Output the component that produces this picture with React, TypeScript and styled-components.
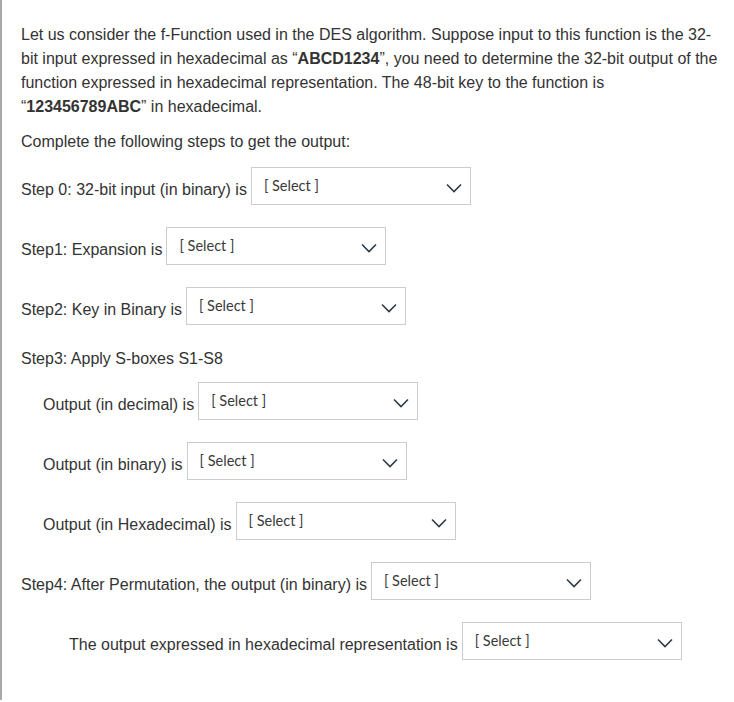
import styled, { createGlobalStyle } from "styled-components";

const GlobalStyle = createGlobalStyle`
  html, body {
    margin: 0;
    padding: 0;
    background: #ffffff;
  }
  body {
    font-family: "Liberation Sans", Arial, Helvetica, sans-serif;
    color: #333333;
  }
`;

const Page = styled.div`
  width: 734px;
  height: 700px;
  box-sizing: border-box;
  border-left: 2px solid #a8a8a8;
  padding: 23px 16px 0 19px;
`;

const Paragraph = styled.p<{ $gap?: number }>`
  margin: 0 0 ${(p) => p.$gap ?? 0}px 0;
  font-size: 16px;
  line-height: 24px;
`;

const Row = styled.div<{ $indent?: number }>`
  display: flex;
  align-items: flex-start;
  margin: 0 0 22px ${(p) => p.$indent ?? 0}px;
`;

const Label = styled.span`
  font-size: 16px;
  line-height: 24px;
  margin-top: 11px;
  margin-right: 4px;
  white-space: nowrap;
`;

const Heading = styled.div`
  font-size: 16px;
  line-height: 24px;
  margin: 1px 0 11px 0;
`;

const SelectBox = styled.div`
  width: 220px;
  height: 38px;
  box-sizing: border-box;
  border: 1px solid #c7cdd1;
  background: #fff;
  display: flex;
  align-items: flex-start;
  justify-content: space-between;
  padding: 8px 8px 0 12px;
`;

const SelectText = styled.span`
  font-family: Lato, "Liberation Sans", sans-serif;
  font-size: 14.5px;
  line-height: 20px;
  color: #3a3a3a;
`;

const Chevron = styled.svg`
  width: 16px;
  height: 10px;
  margin-top: 7px;
`;

function Select() {
  return (
    <SelectBox>
      <SelectText>[ Select ]</SelectText>
      <Chevron viewBox="0 0 16 10">
        <path d="M1 1.5 L8 8.5 L15 1.5" fill="none" stroke="#2d3b45" strokeWidth="1.6" />
      </Chevron>
    </SelectBox>
  );
}

const steps: { label: string; indent: number }[][] = [
  [
    { label: "Step 0: 32-bit input (in binary) is", indent: 0 },
    { label: "Step1: Expansion is", indent: 0 },
    { label: "Step2: Key in Binary is", indent: 0 },
  ],
  [
    { label: "Output (in decimal) is", indent: 22 },
    { label: "Output (in binary) is", indent: 22 },
    { label: "Output (in Hexadecimal) is", indent: 22 },
    { label: "Step4: After Permutation, the output (in binary) is", indent: 0 },
    { label: "The output expressed in hexadecimal representation is", indent: 48 },
  ],
];

function App() {
  return (
    <Page>
      <GlobalStyle />
      <Paragraph $gap={11}>
        Let us consider the f-Function used in the DES algorithm. Suppose input to this function is the 32-bit
        input expressed in hexadecimal as “<strong>ABCD1234</strong>”, you need to determine the 32-bit output of
        the function expressed in hexadecimal representation. The 48-bit key to the function is “
        <strong>123456789ABC</strong>” in hexadecimal.
      </Paragraph>
      <Paragraph $gap={13}>Complete the following steps to get the output:</Paragraph>
      {steps[0].map((s) => (
        <Row key={s.label} $indent={s.indent}>
          <Label>{s.label}</Label>
          <Select />
        </Row>
      ))}
      <Heading>Step3: Apply S-boxes S1-S8</Heading>
      {steps[1].map((s) => (
        <Row key={s.label} $indent={s.indent}>
          <Label>{s.label}</Label>
          <Select />
        </Row>
      ))}
    </Page>
  );
}

export default App;
